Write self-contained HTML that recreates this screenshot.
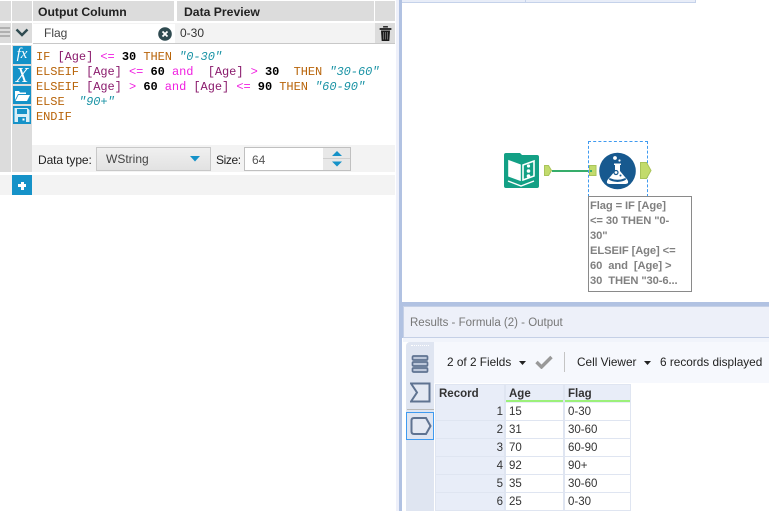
<!DOCTYPE html>
<html><head><meta charset="utf-8">
<style>
html,body{margin:0;padding:0;background:#fff}
body{width:769px;height:511px;position:relative;overflow:hidden;font-family:"Liberation Sans",sans-serif;font-size:12px;color:#222}
.a{position:absolute}
.t{position:absolute;white-space:pre;line-height:14px}
.code{position:absolute;left:36px;white-space:pre;font-family:"Liberation Mono",monospace;font-size:12px;line-height:15px;letter-spacing:-.05px;color:#111}
.k{color:#b8640a}.f{color:#8a1a6c}.o{color:#f01ee0}.s{color:#1a93a5;font-style:italic}
.code b{color:#000}
.c{position:absolute;background:#fff;height:17px;line-height:19px;font-size:11.5px;color:#333}
.h{position:absolute;background:#e8edf8;height:17px;line-height:19px;font-size:11.5px;text-align:right;color:#333}
</style></head><body>

<!-- left panel -->
<div class="a" style="left:0;top:1px;width:11px;height:20px;background:#dcdcdc"></div>
<div class="a" style="left:0;top:23px;width:11px;height:20px;background:#dcdcdc"></div>
<div class="a" style="left:0;top:45px;width:11px;height:127px;background:#dcdcdc"></div>
<div class="a" style="left:12px;top:1px;width:20px;height:20px;background:#dcdcdc"></div>
<div class="a" style="left:12px;top:23px;width:20px;height:20px;background:#dcdcdc"></div>
<div class="a" style="left:12px;top:45px;width:20px;height:127px;background:#dcdcdc"></div>
<div class="a" style="left:33px;top:1px;width:141px;height:20px;background:#dcdcdc"></div>
<div class="a" style="left:177px;top:1px;width:197px;height:20px;background:#dcdcdc"></div>
<div class="a" style="left:375px;top:1px;width:20px;height:20px;background:#dcdcdc"></div>
<div class="t" style="left:38px;top:5px;font-weight:bold;font-size:12.2px;color:#222">Output Column</div>
<div class="t" style="left:184px;top:5px;font-weight:bold;font-size:12.2px;color:#222">Data Preview</div>

<div class="a" style="left:33px;top:23px;width:362px;height:20px;background:#f3f3f3"></div>
<div class="a" style="left:33px;top:24px;width:142px;height:19px;background:#fff"></div>
<div class="a" style="left:375px;top:23px;width:20px;height:20px;background:#dcdcdc"></div>
<div class="a" style="left:33px;top:43px;width:362px;height:1px;background:#c8c8c8"></div>
<div class="a" style="left:0;top:27px;width:10px;height:2px;background:#b0b0b0"></div>
<div class="a" style="left:0;top:31px;width:10px;height:2px;background:#b0b0b0"></div>
<div class="a" style="left:0;top:35px;width:10px;height:2px;background:#b0b0b0"></div>
<svg class="a" style="left:15px;top:28px" width="14" height="10"><path d="M1.5 1.5L7 7L12.5 1.5" fill="none" stroke="#2f4a50" stroke-width="2.4"/></svg>
<div class="t" style="left:44px;top:26px;color:#444">Flag</div>
<div class="t" style="left:180px;top:26px;color:#333">0-30</div>
<svg class="a" style="left:158px;top:27px" width="14" height="14"><circle cx="7" cy="7" r="6.8" fill="#2f4a50"/><path d="M4.5 4.5L9.5 9.5M9.5 4.5L4.5 9.5" stroke="#fff" stroke-width="1.8"/></svg>
<svg class="a" style="left:378px;top:25px" width="15" height="17"><path d="M5.500 2.500V1.500h4v1M2 3.500h11v1H2z" fill="#1a1a1a" stroke="#1a1a1a" stroke-width=".8"/><path d="M3 5.500h9l-.7 10.500H3.700z" fill="#1a1a1a"/><path d="M5.500 7v7.500M7.500 7v7.500M9.500 7v7.500" stroke="#888" stroke-width=".7"/></svg>

<!-- formula icons -->
<div class="a" style="left:13px;top:46px;width:18px;height:18px;background:#1592c8;color:#fff;font:italic 15px/16px 'Liberation Serif',serif;text-align:center">fx</div>
<div class="a" style="left:13px;top:66px;width:18px;height:18px;background:#1592c8;color:#fff;font:italic 21px/18px 'Liberation Serif',serif;text-align:center">X</div>
<div class="a" style="left:13px;top:86px;width:18px;height:18px;background:#1592c8"></div>
<svg class="a" style="left:13px;top:86px" width="18" height="18"><path d="M2 14V5h4l1 1.500h6V8H5z" fill="#fff"/><path d="M5.500 9H17l-3 6H2.500z" fill="#fff"/></svg>
<div class="a" style="left:13px;top:106px;width:18px;height:18px;background:#1592c8"></div>
<svg class="a" style="left:13px;top:106px" width="18" height="18"><path d="M1.500 2h13l2 2v12h-15z" fill="#d9eef7"/><path d="M4 3h10v5H4z" fill="#1592c8"/><path d="M5 11h8v5H5z" fill="#1592c8"/><path d="M9.500 12.500h2v2h-2z" fill="#fff"/></svg>

<!-- code -->
<div class="code" style="top:50px"><span class="k">IF</span> <span class="f">[Age]</span> <span class="o">&lt;=</span> <b>30</b> <span class="k">THEN</span> <span class="s">"0-30"</span></div>
<div class="code" style="top:65px"><span class="k">ELSEIF</span> <span class="f">[Age]</span> <span class="o">&lt;=</span> <b>60</b> <span class="o">and</span>  <span class="f">[Age]</span> <span class="o">&gt;</span> <b>30</b>  <span class="k">THEN</span> <span class="s">"30-60"</span></div>
<div class="code" style="top:80px"><span class="k">ELSEIF</span> <span class="f">[Age]</span> <span class="o">&gt;</span> <b>60</b> <span class="o">and</span> <span class="f">[Age]</span> <span class="o">&lt;=</span> <b>90</b> <span class="k">THEN</span> <span class="s">"60-90"</span></div>
<div class="code" style="top:95px"><span class="k">ELSE</span>  <span class="s">"90+"</span></div>
<div class="code" style="top:110px"><span class="k">ENDIF</span></div>

<!-- data type row -->
<div class="a" style="left:32px;top:145px;width:363px;height:27px;background:#f3f3f3"></div>
<div class="t" style="left:38px;top:153px;color:#222;letter-spacing:-.1px">Data type:</div>
<div class="a" style="left:96px;top:147px;width:113px;height:22px;border:1px solid #c8c8c8;background:linear-gradient(#f0f0f0,#e2e2e2)"></div>
<div class="t" style="left:106px;top:152px;color:#444">WString</div>
<svg class="a" style="left:190px;top:156px" width="10" height="6"><path d="M0 0h10L5 5.500z" fill="#1592c8"/></svg>
<div class="t" style="left:216px;top:153px;color:#222;letter-spacing:-.4px">Size:</div>
<div class="a" style="left:244px;top:147px;width:105px;height:22px;border:1px solid #c0c0c0;background:#fff"></div>
<div class="a" style="left:323px;top:148px;width:27px;height:22px;background:#e8e8e8"></div>
<div class="a" style="left:323px;top:158px;width:27px;height:1px;background:#cfcfcf"></div>
<div class="t" style="left:252px;top:153px;color:#555">64</div>
<svg class="a" style="left:332px;top:151px" width="10" height="16"><path d="M0 5h10L5 0zM0 10.500h10L5 15.500z" fill="#1592c8"/></svg>

<!-- add row -->
<div class="a" style="left:0;top:175px;width:395px;height:20px;background:#f3f3f3"></div>
<div class="a" style="left:12px;top:175px;width:20px;height:20px;background:#1592c8"></div>
<div class="a" style="left:18px;top:184px;width:8px;height:3px;background:#fff"></div>
<div class="a" style="left:20.500px;top:181.500px;width:3px;height:8px;background:#fff"></div>

<!-- splitter -->
<div class="a" style="left:396px;top:0;width:3px;height:511px;background:#eef0fa"></div>
<div class="a" style="left:399px;top:0;width:3px;height:511px;background:#b1c2e2"></div>

<!-- top tab strip -->
<div class="a" style="left:402px;top:0;width:293px;height:2px;background:#e8edf8;border-bottom:1px solid #c5d2ea;border-right:1px solid #c5d2ea"></div>
<div class="a" style="left:525px;top:0;width:1px;height:2px;background:#c5d2ea"></div>

<!-- canvas tools -->
<svg class="a" style="left:503px;top:152px" width="38" height="38">
<path d="M3 1h14l2 2h15a2 2 0 0 1 2 2v29a2 2 0 0 1-2 2H3a2 2 0 0 1-2-2V3a2 2 0 0 1 2-2z" fill="#13a085"/>
<path d="M6 9l11 4v15L6 24zM20 13l11-4v15l-11 4z" fill="none" stroke="#fff" stroke-width="1.600"/>
<path d="M6.500 9.500l10.500 4v14L6.500 23.500z" fill="#fff"/>
<path d="M5 29l13 5 13-5" fill="none" stroke="#fff" stroke-width="1.400"/>
<circle cx="25.500" cy="14" r="1.600" fill="#fff"/><circle cx="25.500" cy="19" r="1.800" fill="#fff"/><circle cx="25.500" cy="24" r="1.800" fill="#fff"/>
</svg>
<svg class="a" style="left:544px;top:165px" width="8" height="11"><path d="M.5.500H4.500l3 5-3 5H.5z" fill="#c2db6c" stroke="#a9c45a"/></svg>
<div class="a" style="left:552px;top:170px;width:40px;height:2px;background:#36ad6b"></div>
<svg class="a" style="left:589px;top:165px" width="8" height="11"><path d="M.5.500h6.500v10H.5z" fill="#c2db6c" stroke="#a9c45a"/></svg>
<div class="a" style="left:590px;top:170px;width:2px;height:2px;background:#36ad6b"></div>
<div class="a" style="left:588px;top:141px;width:60px;height:56px;border:1px dashed #3f9af0;box-sizing:border-box;border-bottom:0"></div>
<svg class="a" style="left:599px;top:152px" width="38" height="38">
<circle cx="18.500" cy="19" r="18.300" fill="#17598f"/>
<circle cx="16" cy="6" r="1.900" fill="#fff"/><circle cx="20.500" cy="8.500" r="1.100" fill="#fff"/>
<path d="M15 11.500h7l0 1.500h-1v6l7.500 9q2 3.500-2 4H10.500q-4-.5-2-4l7.500-9v-6h-1z" fill="#fff"/>
<path d="M10.500 26q8 3.500 16 0l.5 1.500q-2 2-8.500 2.500-6.500-.5-8.500-2.500z" fill="#17598f"/>
<circle cx="17" cy="20.500" r="2" fill="none" stroke="#17598f" stroke-width="1.200"/><circle cx="21.500" cy="23.500" r="1" fill="#17598f"/>
</svg>
<svg class="a" style="left:640px;top:162px" width="12" height="17"><path d="M.5.500H6.500l4.500 8-4.500 8H.5z" fill="#c2db6c" stroke="#a9c45a"/></svg>

<!-- annotation -->
<div class="a" style="left:588px;top:196px;width:104px;height:96px;border:1px solid #8a8a8a;box-sizing:border-box;background:#fff"></div>
<div class="t" style="left:590px;top:199px;font-size:11.200px;line-height:15px;color:#808080;font-weight:bold;letter-spacing:-.1px">Flag = IF [Age]
&lt;= 30 THEN "0-
30"
ELSEIF [Age] &lt;=
60  and  [Age] &gt;
30  THEN "30-6...</div>

<!-- results -->
<div class="a" style="left:402px;top:302px;width:367px;height:209px;background:#b1c2e2"></div>
<div class="a" style="left:403px;top:306px;width:366px;height:32px;background:#edf0f9;border:1px solid #c5d0e6;border-right:0;box-sizing:border-box"></div>
<div class="t" style="left:410px;top:316px;font-size:11.500px;color:#777">Results - Formula (2) - Output</div>
<div class="a" style="left:402px;top:338px;width:367px;height:173px;background:#fff"></div>
<div class="a" style="left:403px;top:338px;width:366px;height:4px;background:#f1f4fb"></div>
<div class="a" style="left:406px;top:342px;width:28px;height:169px;background:#dfe5f1;border-radius:4px 0 0 0"></div>
<div class="a" style="left:411px;top:345px;width:18px;height:1px;border-top:1px dotted #fff"></div>
<div class="a" style="left:434px;top:342px;width:335px;height:41px;background:#f6f8fd"></div>

<svg class="a" style="left:411px;top:354px" width="18" height="20"><g fill="#bcc7da" stroke="#5f7391" stroke-width="1.700"><rect x="1.500" y="2" width="15" height="4" rx="1"/><rect x="1.500" y="8" width="15" height="4" rx="1"/><rect x="1.500" y="14" width="15" height="4" rx="1"/></g></svg>
<svg class="a" style="left:410px;top:382px" width="21" height="21"><path d="M1 1.500h18.500v18H1l6-9z" fill="#e4e9f3" stroke="#5f7391" stroke-width="2"/></svg>
<div class="a" style="left:407px;top:409px;width:27px;height:1px;background:#b9b9b9"></div>
<div class="a" style="left:406px;top:412px;width:28px;height:28px;border:1px solid #3f9af0;box-sizing:border-box;background:#dfe5f1"></div>
<svg class="a" style="left:410px;top:416px" width="22" height="20"><path d="M4 2h12l4.500 8-4.500 8H4q-2.500 0-2.500-2.500v-11Q1.500 2 4 2z" fill="#e4e9f3" stroke="#5f7391" stroke-width="2"/></svg>

<div class="t" style="left:447px;top:355px;font-size:11.800px;color:#222">2 of 2 Fields</div>
<svg class="a" style="left:519px;top:361px" width="7" height="4"><path d="M0 0h7L3.500 4z" fill="#222"/></svg>
<svg class="a" style="left:535px;top:355px" width="18" height="14"><path d="M1.500 7l5 5 10-10" fill="none" stroke="#999" stroke-width="3.400"/></svg>
<div class="a" style="left:564px;top:352px;width:1px;height:20px;background:#c4c4c4"></div>
<div class="t" style="left:577px;top:355px;font-size:11.800px;color:#222">Cell Viewer</div>
<svg class="a" style="left:644px;top:361px" width="7" height="4"><path d="M0 0h7L3.500 4z" fill="#222"/></svg>
<div class="t" style="left:660px;top:355px;font-size:11.800px;color:#222">6 records displayed</div>

<!-- table -->
<div class="a" style="left:435px;top:384px;width:196px;height:127px;background:#dfe5f1"></div>
<div class="h" style="left:436px;top:385px;width:68px;height:18px;text-align:left;font-weight:bold"><span style="margin-left:3px">Record</span></div>
<div class="h" style="left:506px;top:385px;width:57px;height:18px;text-align:left;font-weight:bold"><span style="margin-left:3px">Age</span></div>
<div class="h" style="left:565px;top:385px;width:65px;height:18px;text-align:left;font-weight:bold"><span style="margin-left:3px">Flag</span></div>
<div class="a" style="left:506px;top:400px;width:57px;height:2px;background:#9cf07a"></div>
<div class="a" style="left:565px;top:400px;width:65px;height:2px;background:#9cf07a"></div>

<div class="h" style="left:436px;top:403px;width:67px;padding-right:1px">1</div><div class="c" style="left:506px;top:403px;width:54px;padding-left:3px">15</div><div class="c" style="left:565px;top:403px;width:62px;padding-left:3px">0-30</div>
<div class="h" style="left:436px;top:421px;width:67px;padding-right:1px">2</div><div class="c" style="left:506px;top:421px;width:54px;padding-left:3px">31</div><div class="c" style="left:565px;top:421px;width:62px;padding-left:3px">30-60</div>
<div class="h" style="left:436px;top:439px;width:67px;padding-right:1px">3</div><div class="c" style="left:506px;top:439px;width:54px;padding-left:3px">70</div><div class="c" style="left:565px;top:439px;width:62px;padding-left:3px">60-90</div>
<div class="h" style="left:436px;top:457px;width:67px;padding-right:1px">4</div><div class="c" style="left:506px;top:457px;width:54px;padding-left:3px">92</div><div class="c" style="left:565px;top:457px;width:62px;padding-left:3px">90+</div>
<div class="h" style="left:436px;top:475px;width:67px;padding-right:1px">5</div><div class="c" style="left:506px;top:475px;width:54px;padding-left:3px">35</div><div class="c" style="left:565px;top:475px;width:62px;padding-left:3px">30-60</div>
<div class="h" style="left:436px;top:493px;width:67px;padding-right:1px">6</div><div class="c" style="left:506px;top:493px;width:54px;padding-left:3px">25</div><div class="c" style="left:565px;top:493px;width:62px;padding-left:3px">0-30</div>

</body></html>
